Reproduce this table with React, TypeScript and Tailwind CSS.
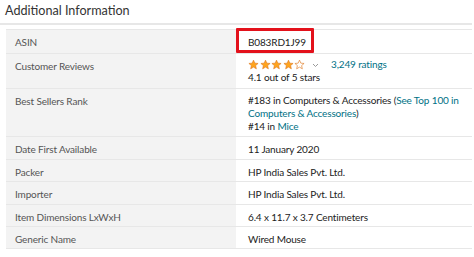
import React from "react"

function Star({ filled }: { filled: boolean }) {
    return (
        <svg width="11" height="11" viewBox="0 0 24 24" className="shrink-0">
            <path
                d="M12 2.5l2.9 6.6 7.1.6-5.4 4.7 1.6 7-6.2-3.7-6.2 3.7 1.6-7L2 9.7l7.1-.6z"
                fill={filled ? "#ffa41c" : "none"}
                stroke="#de7921"
                strokeWidth="1.4"
                strokeLinejoin="round"
            />
        </svg>
    )
}

function Row({ label, children, h, pt = "pt-[6px]" }: { label: string; children: React.ReactNode; h: string; pt?: string }) {
    return (
        <div className={`flex border-b border-[#e7e7e7] ${h}`}>
            <div className="w-[230px] shrink-0 bg-[#f3f3f3] pl-[9px] pt-[6px] text-[#555]">{label}</div>
            <div className={`flex-1 pl-[12px] text-[#222] ${pt}`}>{children}</div>
        </div>
    )
}

export default function App() {
    return (
        <div
            className="relative w-[474px] h-[257px] bg-white overflow-hidden text-[10px] leading-[13px] tracking-[-0.15px]"
            style={{ fontFamily: "Lato, 'Liberation Sans', sans-serif" }}
        >
            {/* Heading */}
            <div className="pl-[5px] pt-[3px] h-[23px] text-[12.6px] leading-[16px] tracking-normal text-[#333]">Additional Information</div>
            <div className="h-[2px] w-[472px] bg-[#e7e7e7]" />

            {/* Details table */}
            <div className="ml-[6px] mt-[4px] w-[466px] border-t border-[#e7e7e7]">
                <Row label="ASIN" h="h-[24px]">B083RD1J99</Row>
                <Row label="Customer Reviews" h="h-[35px]" pt="pt-[4px]">
                    <div className="flex items-center h-[13px] gap-[0.5px]">
                        <Star filled />
                        <Star filled />
                        <Star filled />
                        <Star filled />
                        <Star filled={false} />
                        <svg width="7" height="5" viewBox="0 0 7 5" className="ml-[6px] mt-[1px]">
                            <path d="M1 1l2.5 2.5L6 1" fill="none" stroke="#999" strokeWidth="1" />
                        </svg>
                        <span className="ml-[12px] text-[#007185]">3,249 ratings</span>
                    </div>
                    <div>4.1 out of 5 stars</div>
                </Row>
                <Row label="Best Sellers Rank" h="h-[48px]" pt="pt-[5px]">
                    <div className="whitespace-nowrap">
                        #183 in Computers &amp; Accessories (<span className="text-[#007185]">See Top 100 in</span>
                    </div>
                    <div className="whitespace-nowrap">
                        <span className="text-[#007185]">Computers &amp; Accessories</span>)
                    </div>
                    <div>
                        #14 in <span className="text-[#007185]">Mice</span>
                    </div>
                </Row>
                <Row label="Date First Available" h="h-[23px]">11 January 2020</Row>
                <Row label="Packer" h="h-[22px]">HP India Sales Pvt. Ltd.</Row>
                <Row label="Importer" h="h-[23px]">HP India Sales Pvt. Ltd.</Row>
                <Row label="Item Dimensions LxWxH" h="h-[22px]">6.4 x 11.7 x 3.7 Centimeters</Row>
                <Row label="Generic Name" h="h-[22px]">Wired Mouse</Row>
            </div>

            {/* Red highlight annotation */}
            <div className="absolute left-[236px] top-[28px] w-[78px] h-[25px] border-[3px] border-[#e3111b] rounded-[1px]" />
        </div>
    )
}
